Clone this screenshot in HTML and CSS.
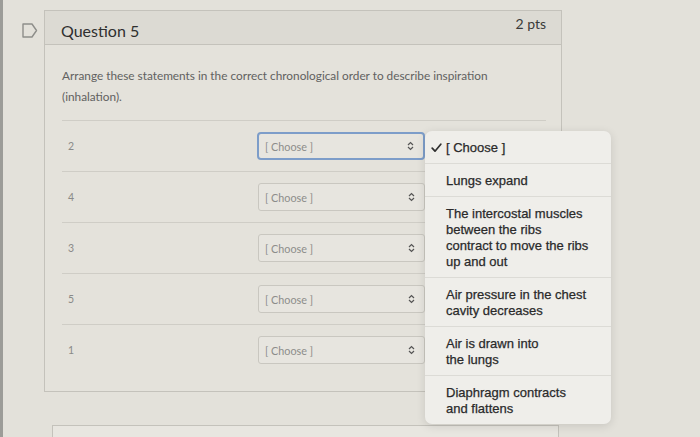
FILE: index.html
```html
<!DOCTYPE html>
<html>
<head>
<meta charset="utf-8">
<link rel="stylesheet" href="styles.css">
</head>
<body>
<div class="page">
  <div class="flag">
    <svg width="16" height="15" viewBox="0 0 16 15"><path d="M1 1 H10 L14.5 7.5 L10 14 H1 Z" fill="none" stroke="#8e8e8a" stroke-width="1.4" stroke-linejoin="round"/></svg>
  </div>
  <div class="column">
    <div class="card">
      <div class="card-header">
        <span class="q-title">Question 5</span>
        <span class="q-pts">2 pts</span>
      </div>
      <div class="card-body">
        <p class="q-text">Arrange these statements in the correct chronological order to describe inspiration (inhalation).</p>
        <div class="rows">
          <div class="row"><span class="num">2</span><div class="select focused"><span>[ Choose ]</span><svg class="arr" width="7" height="10" viewBox="0 0 7 10"><path d="M1 4 L3.5 1.5 L6 4 M1 6 L3.5 8.5 L6 6" fill="none" stroke="#555" stroke-width="1.2"/></svg></div></div>
          <div class="row"><span class="num">4</span><div class="select"><span>[ Choose ]</span><svg class="arr" width="7" height="10" viewBox="0 0 7 10"><path d="M1 4 L3.5 1.5 L6 4 M1 6 L3.5 8.5 L6 6" fill="none" stroke="#555" stroke-width="1.2"/></svg></div></div>
          <div class="row"><span class="num">3</span><div class="select"><span>[ Choose ]</span><svg class="arr" width="7" height="10" viewBox="0 0 7 10"><path d="M1 4 L3.5 1.5 L6 4 M1 6 L3.5 8.5 L6 6" fill="none" stroke="#555" stroke-width="1.2"/></svg></div></div>
          <div class="row"><span class="num">5</span><div class="select"><span>[ Choose ]</span><svg class="arr" width="7" height="10" viewBox="0 0 7 10"><path d="M1 4 L3.5 1.5 L6 4 M1 6 L3.5 8.5 L6 6" fill="none" stroke="#555" stroke-width="1.2"/></svg></div></div>
          <div class="row"><span class="num">1</span><div class="select"><span>[ Choose ]</span><svg class="arr" width="7" height="10" viewBox="0 0 7 10"><path d="M1 4 L3.5 1.5 L6 4 M1 6 L3.5 8.5 L6 6" fill="none" stroke="#555" stroke-width="1.2"/></svg></div></div>
        </div>
      </div>
    </div>
    <div class="card next"></div>
  </div>
</div>
<div class="dropdown">
  <div class="opt checked"><svg class="check" width="11" height="10" viewBox="0 0 11 10"><path d="M1.2 5.2 L4 8.2 L9.8 1.2" fill="none" stroke="#2f2f2f" stroke-width="1.7" stroke-linecap="round" stroke-linejoin="round"/></svg>[ Choose ]</div>
  <div class="opt">Lungs expand</div>
  <div class="opt">The intercostal muscles<br>between the ribs<br>contract to move the ribs<br>up and out</div>
  <div class="opt">Air pressure in the chest<br>cavity decreases</div>
  <div class="opt">Air is drawn into<br>the lungs</div>
  <div class="opt">Diaphragm contracts<br>and flattens</div>
</div>
</body>
</html>
```
FILE: styles.css
```css
html, body {
  margin: 0;
  padding: 0;
}
body {
  position: relative;
  width: 700px;
  height: 437px;
  overflow: hidden;
  background: #e3e1da;
  font-family: Lato, "Open Sans", sans-serif;
  border-left: 3px solid #9c9c98;
  box-sizing: border-box;
}
.page {
  display: flex;
  padding-top: 10px;
}
.flag {
  width: 16px;
  padding-left: 19px;
  padding-top: 13px;
  margin-right: 6px;
}
.flag svg {
  display: block;
}
.column {
  display: flex;
  flex-direction: column;
  gap: 33px;
}
.card {
  width: 516px;
  border: 1px solid #c4c2bb;
  background: #e4e2db;
}
.card-header {
  height: 33px;
  background: #dcdad3;
  border-bottom: 1px solid #c4c2bb;
  display: flex;
  justify-content: space-between;
  align-items: flex-start;
  padding: 0 15px 0 16px;
}
.q-title {
  font-size: 16px;
  line-height: 18px;
  color: #2f2f2f;
  padding-top: 11px;
}
.q-pts {
  font-size: 14px;
  line-height: 16px;
  color: #3a3a3a;
  padding-top: 5px;
}
.card-body {
  padding: 20px 15px 16px 17px;
}
.q-text {
  margin: 0;
  font-size: 11.8px;
  line-height: 21px;
  color: #616160;
  width: 450px;
}
.rows {
  margin-top: 13px;
}
.row {
  display: grid;
  grid-template-columns: 196px 167px;
  align-items: center;
  height: 50px;
  border-top: 1px solid #cfcdc6;
}
.num {
  padding-left: 6px;
  font-size: 10.5px;
  color: #8a8a88;
}
.select {
  height: 26px;
  border: 1px solid #c9c7c0;
  border-radius: 3px;
  background: #e7e5df;
  display: flex;
  align-items: center;
  justify-content: space-between;
  padding: 0 9px 0 6px;
  font-size: 10.8px;
  color: #8c8c8a;
}
.select.focused {
  height: 24px;
  border: 2px solid #7d9dc9;
  border-radius: 4px;
  margin-left: -1px;
}
.arr {
  display: block;
}
.next {
  height: 14px;
  width: 505px;
  background: #e8e6e0;
  margin-left: 8px;
}
.dropdown {
  position: absolute;
  left: 422px;
  top: 131px;
  width: 186px;
  background: #efeeea;
  border-radius: 7px;
  box-shadow: 0 2px 10px rgba(0, 0, 0, 0.12);
  font-family: "Liberation Sans", Arial, sans-serif;
  font-size: 13px;
  line-height: 16px;
  color: #2a2a2a;
  -webkit-text-stroke: 0.25px #2a2a2a;
}
.opt {
  position: relative;
  padding: 9px 8px 7px 21px;
  border-top: 1px solid #dcdbd6;
}
.opt:first-child {
  border-top: none;
}
.check {
  position: absolute;
  left: 6px;
  top: 12px;
}
```
